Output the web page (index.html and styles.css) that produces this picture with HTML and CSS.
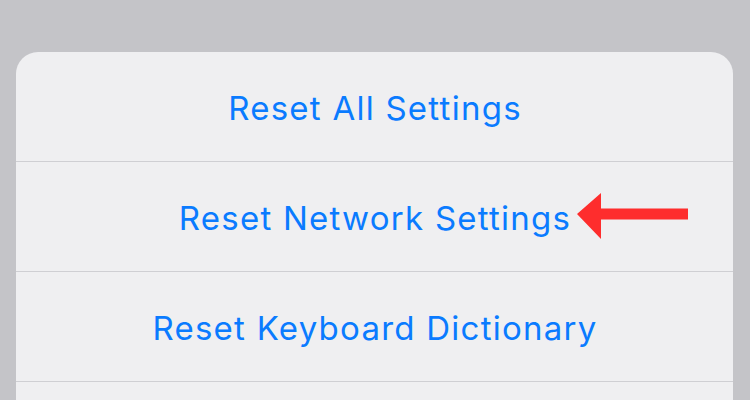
FILE: index.html
```html
<!DOCTYPE html>
<html lang="en">
<head>
  <meta charset="UTF-8" />
  <meta name="viewport" content="width=device-width, initial-scale=1.0" />
  <title>Reset</title>
  <link rel="stylesheet" href="styles.css">
</head>
<body>
  <div class="sheet">
    <div class="sheet-row">Reset All Settings</div>
    <div class="sheet-row">
      Reset Network Settings
      <svg class="arrow" width="120" height="50" viewBox="0 0 120 50">
        <polygon points="2,23 26,2 26,17.5 113,17.5 113,28.5 26,28.5 26,48" fill="#fe2d2d" />
      </svg>
    </div>
    <div class="sheet-row">Reset Keyboard Dictionary</div>
    <div class="sheet-row last"></div>
  </div>
</body>
</html>
```

FILE: styles.css
```css
:root {
  --page-bg: #c4c4c8;
  --sheet-bg: #efeff1;
  --line: #cfcfd3;
  --blue: #0a7bff;
  --radius: 22px;
}
* {
  box-sizing: border-box;
}
html, body {
  margin: 0;
  padding: 0;
  width: 100%;
  height: 100%;
  overflow: hidden;
}
body {
  background: var(--page-bg);
  font-family: Inter, 'Liberation Sans', sans-serif;
  padding: 52px 17px 0 16px;
}
.sheet {
  background: var(--sheet-bg);
  border-radius: var(--radius) var(--radius) 0 0;
  display: flex;
  flex-direction: column;
}
.sheet-row {
  position: relative;
  height: 110px;
  border-bottom: 1px solid var(--line);
  display: flex;
  align-items: center;
  justify-content: center;
  color: var(--blue);
  font-size: 33px;
  letter-spacing: 1.25px;
  padding: 2px 0 0 1px;
}
.sheet-row.last {
  height: 18px;
  border-bottom: none;
}
.arrow {
  position: absolute;
  left: 559px;
  top: 29px;
}
```
